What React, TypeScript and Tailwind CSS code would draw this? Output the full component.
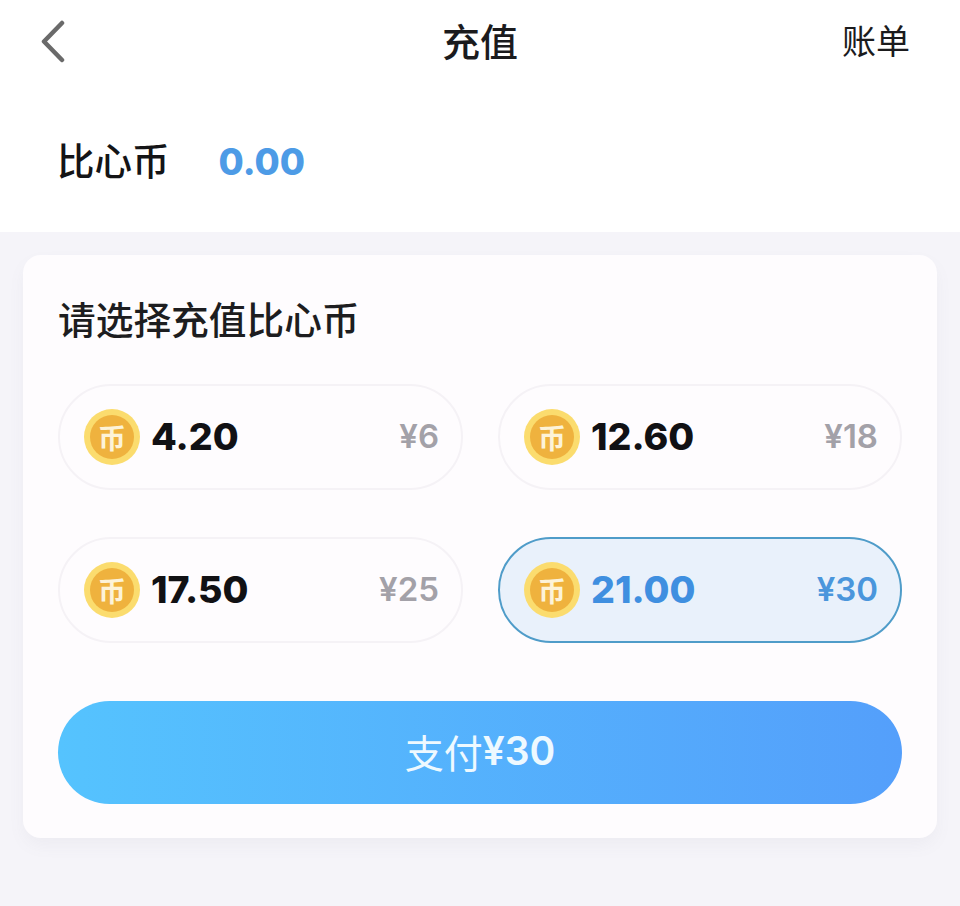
const cjk = "font-['Noto_Sans_CJK_SC','Noto_Sans',sans-serif]";

const Coin = () => {
  return (
    <div className="w-[56px] h-[56px] shrink-0 rounded-full bg-[#fbdc6e] flex items-center justify-center">
      <div className="w-[44px] h-[44px] rounded-full bg-[#efb23e] flex items-center justify-center">
        <span className={`${cjk} text-[28px] leading-none font-bold text-[#fdf3d8]`}>币</span>
      </div>
    </div>
  );
};

const Option = ({ amount, price, active }: { amount: string; price: string; active?: boolean }) => {
  return (
    <div
      className={
        active
          ? "h-[106px] rounded-full border-2 border-[#4f9cc9] bg-[#e9f1fb] flex items-center pl-[24px] pr-[22px]"
          : "h-[106px] rounded-full border-2 border-[#f5f2f6] bg-[#fefcfe] flex items-center pl-[24px] pr-[22px]"
      }
    >
      <Coin />
      <span
        className={
          active
            ? "ml-[11px] font-['Inter',sans-serif] text-[37.5px] font-extrabold text-[#3f8fe0]"
            : "ml-[11px] font-['Inter',sans-serif] text-[37.5px] font-extrabold text-[#111114]"
        }
      >
        {amount}
      </span>
      <span
        className={
          active
            ? "ml-auto font-['Inter',sans-serif] text-[33px] font-semibold text-[#4a96dc]"
            : "ml-auto font-['Inter',sans-serif] text-[33px] font-semibold text-[#a3a1a8]"
        }
      >
        {price}
      </span>
    </div>
  );
};

const App = () => {
  return (
    <div className="w-[960px] h-[906px] overflow-hidden bg-[#f5f4f9]">
      {/* Header + balance */}
      <div className="h-[232px] bg-white">
        <div className="relative h-[85px] flex items-center justify-between pl-[38px] pr-[50px]">
          <svg width="32" height="44" viewBox="0 0 32 44" fill="none" className="-mt-[2px]">
            <path d="M24 3 L6 21.5 L24 40" stroke="#6a6a6a" strokeWidth="4.5" strokeLinecap="round" strokeLinejoin="round" />
          </svg>
          <h1 className={`${cjk} absolute left-0 right-0 -top-[3px] leading-[85px] text-center text-[38px] font-medium text-[#1b1b1d]`}>
            充值
          </h1>
          <a href="#" className={`${cjk} -mt-[6px] text-[34px] text-[#1b1b1d]`}>
            账单
          </a>
        </div>
        <div className="flex items-center pl-[57px] mt-[42px] h-[70px]">
          <span className={`${cjk} -mt-[6px] text-[37.5px] font-medium text-[#141416]`}>比心币</span>
          <span className="ml-[49px] font-['Inter',sans-serif] text-[36.5px] font-extrabold text-[#4d9be6]">0.00</span>
        </div>
      </div>

      {/* Card */}
      <div className="mx-[23px] mt-[23px] h-[583px] rounded-[18px] bg-[#fefcfe] px-[35px] pt-[38px] shadow-[0_8px_16px_rgba(120,120,140,0.06)]">
        <h2 className={`${cjk} text-[37.7px] leading-[50px] font-medium text-[#1d1d20]`}>请选择充值比心币</h2>
        <div className="grid grid-cols-[405px_404px] gap-x-[35px] gap-y-[47px] mt-[41px]">
          <Option amount="4.20" price="¥6" />
          <Option amount="12.60" price="¥18" />
          <Option amount="17.50" price="¥25" />
          <Option amount="21.00" price="¥30" active />
        </div>
        <button className="mt-[58px] w-full h-[103px] rounded-full bg-gradient-to-r from-[#55c3fe] to-[#549ffb] flex items-center justify-center text-[#eef9ff]">
          <span className={`${cjk} -mt-[2px] text-[39px]`}>支付</span>
          <span className="-mt-[2px] font-['Inter',sans-serif] text-[39px] font-semibold">¥30</span>
        </button>
      </div>
    </div>
  );
};

export default App;
